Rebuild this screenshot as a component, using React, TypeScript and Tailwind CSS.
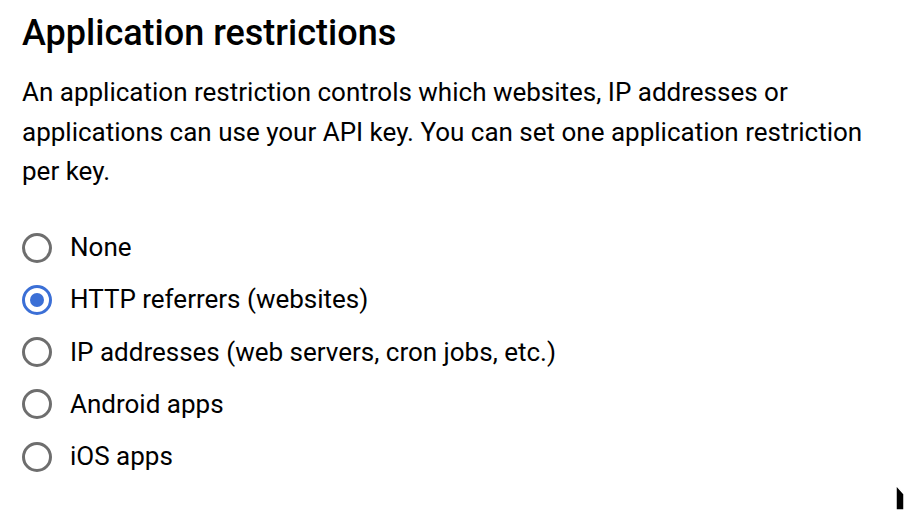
import { useState } from "react";

const options = [
  "None",
  "HTTP referrers (websites)",
  "IP addresses (web servers, cron jobs, etc.)",
  "Android apps",
  "iOS apps",
];

function Radio({ checked }: { checked: boolean }) {
  return (
    <span
      className={`flex h-[30px] w-[30px] shrink-0 items-center justify-center rounded-full border-[3px] ${
        checked ? "border-[#3b6fd6]" : "border-[#6e6e6e]"
      }`}
    >
      {checked && <span className="h-[14px] w-[14px] rounded-full bg-[#3b6fd6]" />}
    </span>
  );
}

export default function App() {
  const [selected, setSelected] = useState(1);

  return (
    <div
      className="relative h-[514px] w-[906px] overflow-hidden bg-white px-[22px] pt-[11px] text-black"
      style={{ fontFamily: "Roboto, 'Liberation Sans', sans-serif" }}
    >
      <h1 className="text-[36px] font-medium leading-[44px]">Application restrictions</h1>
      <p className="mt-[18px] w-[870px] text-[26px] leading-[39.5px]">
        An application restriction controls which websites, IP addresses or applications can use
        your API key. You can set one application restriction per key.
      </p>

      <div className="mt-[41px] flex flex-col gap-[22.25px]">
        {options.map((label, i) => (
          <label
            key={label}
            className="flex h-[30px] cursor-pointer items-center gap-[18px] text-[26px]"
            onClick={() => setSelected(i)}
          >
            <Radio checked={selected === i} />
            <span>{label}</span>
          </label>
        ))}
      </div>

      {/* cursor fragment in the corner */}
      <svg className="absolute left-[894px] top-[484px]" width="12" height="28" viewBox="0 0 12 28">
        <path d="M2 1 L10 10 L10 26 L2 26 Z" fill="#000" stroke="#fff" strokeWidth="1.5" />
      </svg>
    </div>
  );
}
